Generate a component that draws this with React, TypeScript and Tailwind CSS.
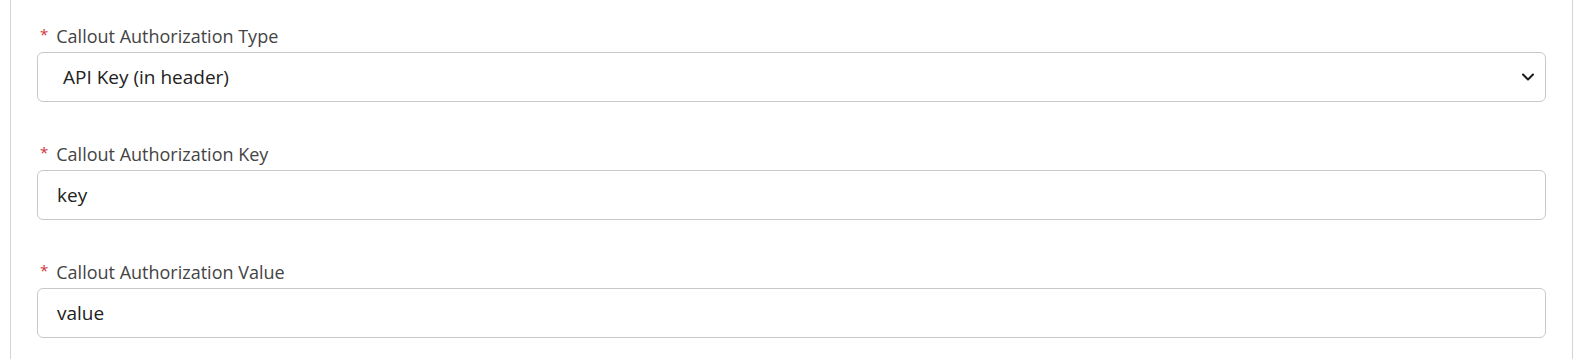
import React from 'react';

// Callout authorization fields
const fields = [
  { id: 'type', label: 'Callout Authorization Type', value: 'API Key (in header)', select: true },
  { id: 'key', label: 'Callout Authorization Key', value: 'key' },
  { id: 'value', label: 'Callout Authorization Value', value: 'value' },
];

const App: React.FC = () => {
  return (
    <div className="min-h-screen bg-white pl-[10px] pr-[12px] font-['Open_Sans',_'Noto_Sans',_sans-serif]">
      <div className="min-h-[359px] border-x border-[#d4d4d4] px-[26px] pt-[24px] flex flex-col gap-[40px]">
        {fields.map((f) => (
          <div key={f.id} className="flex flex-col gap-[4px]">
            <label className="h-[24px] flex items-center text-[18px] text-[#444444]">
              <span className="text-[#d3323a] text-[15px] ml-[3px] mr-[8px] -mt-[3px]">*</span>
              {f.label}
            </label>
            {f.select ? (
              <div className="h-[50px] rounded-[6px] border border-[#c9c9c9] flex items-center pl-[25px] pr-[10px] text-[19px] text-[#222222]">
                <span className="flex-1">{f.value}</span>
                <svg width="14" height="14" viewBox="0 0 14 14" fill="none" className="text-[#1a1a1a]">
                  <path d="M2 4.5 L7 9.5 L12 4.5" stroke="currentColor" strokeWidth="2" strokeLinecap="round" strokeLinejoin="round" />
                </svg>
              </div>
            ) : (
              <div className="h-[50px] rounded-[6px] border border-[#c9c9c9] flex items-center pl-[19px] text-[19px] text-[#222222]">
                {f.value}
              </div>
            )}
          </div>
        ))}
      </div>
    </div>
  );
};

export default App;
